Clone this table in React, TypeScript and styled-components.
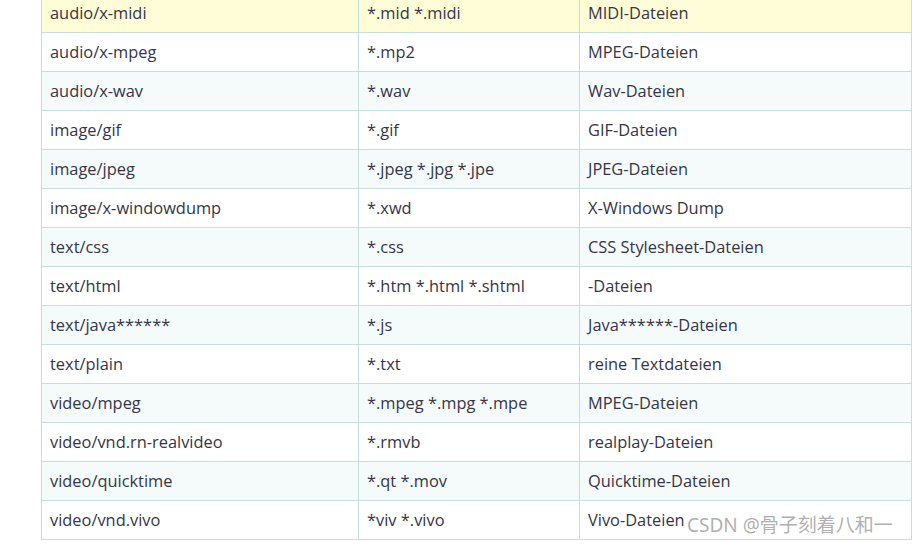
import React from "react";
import styled, { createGlobalStyle } from "styled-components";

const Global = createGlobalStyle`
  html, body { margin: 0; padding: 0; background: #ffffff; overflow: hidden; }
  body { font-family: "Open Sans", "Noto Sans", "Noto Sans CJK SC", sans-serif; }
`;

const Page = styled.div`
  position: relative;
  width: 912px;
  height: 544px;
  overflow: hidden;
  padding-left: 41px;
  box-sizing: border-box;
`;

const Table = styled.table`
  border-collapse: collapse;
  margin-top: -7px;
  width: 870px;
  table-layout: fixed;
  font-size: 16.4px;
  color: #363646;
`;

const Row = styled.tr<{ $tone: "hl" | "plain" | "alt" }>`
  background: ${(p) =>
    p.$tone === "hl" ? "#fefdd8" : p.$tone === "alt" ? "#f5fafa" : "#ffffff"};
`;

const Cell = styled.td`
  border: 1px solid #c5dedc;
  height: 39px;
  padding: 0 8px;
  box-sizing: border-box;
  vertical-align: middle;
  white-space: nowrap;
  line-height: 22px;
`;

const Watermark = styled.div`
  position: absolute;
  left: 687px;
  top: 510px;
  font-family: "Noto Sans", "Noto Sans CJK SC", sans-serif;
  font-size: 19px;
  color: rgba(140, 140, 140, 0.7);
  white-space: nowrap;
`;

const rows: [string, string, string][] = [
  ["audio/x-midi", "*.mid *.midi", "MIDI-Dateien"],
  ["audio/x-mpeg", "*.mp2", "MPEG-Dateien"],
  ["audio/x-wav", "*.wav", "Wav-Dateien"],
  ["image/gif", "*.gif", "GIF-Dateien"],
  ["image/jpeg", "*.jpeg *.jpg *.jpe", "JPEG-Dateien"],
  ["image/x-windowdump", "*.xwd", "X-Windows Dump"],
  ["text/css", "*.css", "CSS Stylesheet-Dateien"],
  ["text/html", "*.htm *.html *.shtml", "-Dateien"],
  ["text/java******", "*.js", "Java******-Dateien"],
  ["text/plain", "*.txt", "reine Textdateien"],
  ["video/mpeg", "*.mpeg *.mpg *.mpe", "MPEG-Dateien"],
  ["video/vnd.rn-realvideo", "*.rmvb", "realplay-Dateien"],
  ["video/quicktime", "*.qt *.mov", "Quicktime-Dateien"],
  ["video/vnd.vivo", "*viv *.vivo", "Vivo-Dateien"],
];

export default function App() {
  return (
    <Page>
      <Global />
      <Table>
        <colgroup>
          <col style={{ width: 317 }} />
          <col style={{ width: 221 }} />
          <col style={{ width: 332 }} />
        </colgroup>
        <tbody>
          {rows.map((r, i) => (
            <Row key={i} $tone={i === 0 ? "hl" : i % 2 === 1 ? "plain" : "alt"}>
              <Cell>{r[0]}</Cell>
              <Cell>{r[1]}</Cell>
              <Cell>{r[2]}</Cell>
            </Row>
          ))}
        </tbody>
      </Table>
      <Watermark>CSDN @骨子刻着八和一</Watermark>
    </Page>
  );
}
